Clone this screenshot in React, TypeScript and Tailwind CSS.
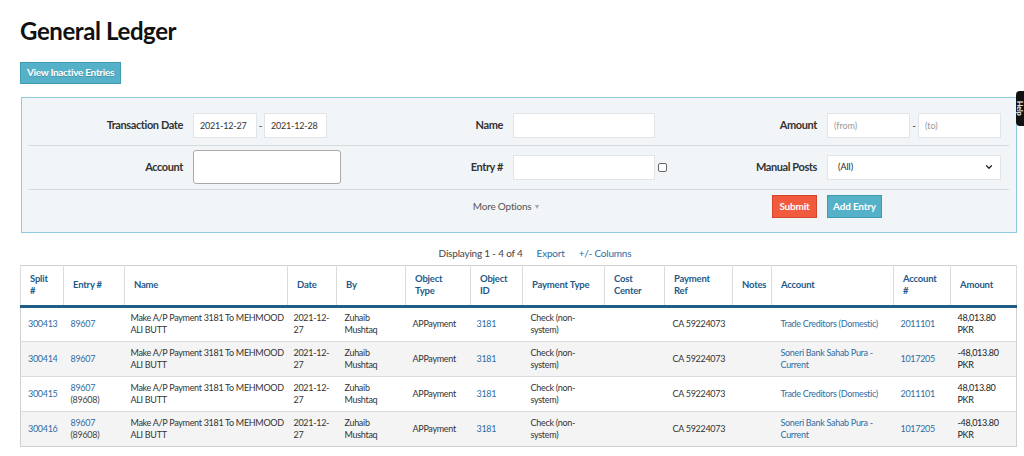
import { ChevronDown } from "lucide-react"

const rows = [
    { split: "300413", entry: "89607", sub: "", acct: ["Trade Creditors (Domestic)"], acctNo: "2011101", amt: "48,013.80" },
    { split: "300414", entry: "89607", sub: "", acct: ["Soneri Bank Sahab Pura -", "Current"], acctNo: "1017205", amt: "-48,013.80" },
    { split: "300415", entry: "89607", sub: "(89608)", acct: ["Trade Creditors (Domestic)"], acctNo: "2011101", amt: "48,013.80" },
    { split: "300416", entry: "89607", sub: "(89608)", acct: ["Soneri Bank Sahab Pura -", "Current"], acctNo: "1017205", amt: "-48,013.80" },
]

const cols = [
    { label: ["Split", "#"], w: 43 },
    { label: ["Entry #"], w: 61 },
    { label: ["Name"], w: 163 },
    { label: ["Date"], w: 49 },
    { label: ["By"], w: 69 },
    { label: ["Object", "Type"], w: 65 },
    { label: ["Object", "ID"], w: 52 },
    { label: ["Payment Type"], w: 82 },
    { label: ["Cost", "Center"], w: 60 },
    { label: ["Payment", "Ref"], w: 68 },
    { label: ["Notes"], w: 39 },
    { label: ["Account"], w: 122 },
    { label: ["Account", "#"], w: 57 },
    { label: ["Amount"], w: 66 },
]

function Label({ children, w }: { children: React.ReactNode; w: string }) {
    return (
        <div className={`${w} shrink-0 whitespace-nowrap pr-[10px] text-right text-[11px] font-bold tracking-[-0.4px] text-[#333]`}>
            {children}
        </div>
    )
}

function Lines({ items }: { items: string[] }) {
    return (
        <>
            {items.map((t) => (
                <div key={t}>{t}</div>
            ))}
        </>
    )
}

function App() {
    return (
        <div className="relative w-[1024px] h-[456px] overflow-hidden bg-white font-['Lato',sans-serif] text-[#333]">
            <h1 className="pl-[20px] pt-[16px] text-[24px] leading-[30px] font-bold tracking-[-0.4px] text-[#111]">General Ledger</h1>

            <div className="pl-[20px] pt-[12px]">
                <button className="h-[22px] w-[101px] whitespace-nowrap border border-[#3f9bb3] bg-[#54b1c8] text-[10px] font-bold tracking-[-0.3px] text-white [text-shadow:0_1px_0_rgba(0,0,0,0.2)]">
                    View Inactive Entries
                </button>
            </div>

            {/* filter panel */}
            <div className="mx-[21px] mt-[13px] w-[996px] border border-[#8fcbdc] bg-[#f2f5f7]">
                <div className="flex h-[47px] items-center px-[6px] pt-[8px]">
                    <Label w="w-[165px]">Transaction Date</Label>
                    <div className="flex w-[152px] items-center">
                        <input readOnly value="2021-12-27" className="h-[25px] w-[64px] border border-[#e2e5e8] bg-white px-[6px] text-[9px] tracking-[-0.2px] text-[#333] outline-none" />
                        <span className="w-[7px] text-center text-[10px]">-</span>
                        <input readOnly value="2021-12-28" className="h-[25px] w-[63px] border border-[#e2e5e8] bg-white px-[6px] text-[9px] tracking-[-0.2px] text-[#333] outline-none" />
                    </div>
                    <Label w="w-[168px]">Name</Label>
                    <div className="w-[159px]">
                        <input className="h-[25px] w-[142px] border border-[#e2e5e8] bg-white outline-none" />
                    </div>
                    <Label w="w-[155px]">Amount</Label>
                    <div className="flex items-center">
                        <input placeholder="(from)" className="h-[25px] w-[83px] border border-[#e2e5e8] bg-white px-[6px] text-[9px] outline-none placeholder:text-[#999]" />
                        <span className="w-[8px] text-center text-[10px]">-</span>
                        <input placeholder="(to)" className="h-[25px] w-[83px] border border-[#e2e5e8] bg-white px-[6px] text-[9px] outline-none placeholder:text-[#999]" />
                    </div>
                </div>
                <div className="ml-[6px] mr-[7px] h-px bg-[#d6dbde]" />
                <div className="flex h-[43px] items-center px-[6px]">
                    <Label w="w-[165px]">Account</Label>
                    <div className="w-[152px]">
                        <input className="h-[34px] w-[148px] rounded-[3px] border border-[#a9a9a9] bg-white outline-none" />
                    </div>
                    <Label w="w-[168px]">Entry #</Label>
                    <div className="flex w-[159px] items-center">
                        <input className="h-[25px] w-[142px] border border-[#e2e5e8] bg-white outline-none" />
                        <span className="ml-[3px] h-[9px] w-[9px] rounded-[2px] border border-[#666] bg-white" />
                    </div>
                    <Label w="w-[155px]">Manual Posts</Label>
                    <div className="flex h-[25px] w-[174px] items-center justify-between border border-[#e2e5e8] bg-white pl-[10px] pr-[6px] text-[9px] text-[#222]">
                        <span>(All)</span>
                        <ChevronDown size={10} strokeWidth={3} className="text-[#222]" />
                    </div>
                </div>
                <div className="ml-[6px] mr-[7px] h-px bg-[#d6dbde]" />
                <div className="flex h-[42px] items-start px-[6px] pt-[5px]">
                    <div className="w-[165px]" />
                    <div className="w-[152px]" />
                    <div className="flex h-[23px] w-[327px] items-center justify-center pr-[4px] text-[10px] tracking-[-0.2px] text-[#555]">
                        More Options
                        <span className="ml-[2px] text-[7px] text-[#aaa]">▼</span>
                    </div>
                    <div className="flex w-[155px] justify-end pr-[10px]">
                        <button className="h-[23px] w-[45px] border border-[#d4452c] bg-[#f25a3e] text-[10px] font-bold tracking-[-0.2px] text-white">Submit</button>
                    </div>
                    <button className="h-[23px] w-[55px] whitespace-nowrap border border-[#3f9bb3] bg-[#54b1c8] text-[10px] font-bold tracking-[-0.2px] text-white">Add Entry</button>
                </div>
            </div>

            {/* help tab */}
            <div className="absolute right-0 top-[91px] flex h-[35px] w-[8px] items-center justify-start overflow-hidden rounded-l-[4px] bg-[#111]">
                <span className="-ml-[4px] rotate-90 text-[7px] font-bold text-white">Help</span>
            </div>

            <div className="flex h-[31px] items-center justify-center gap-[14px] pl-[46px] pt-[10px] text-[10px] tracking-[-0.2px]">
                <span className="text-[#444]">Displaying 1 - 4 of 4</span>
                <span className="text-[#2e6da4]">Export</span>
                <span className="text-[#2e6da4]">+/- Columns</span>
            </div>

            <table className="ml-[20px] mt-[1px] w-[996px] table-fixed border-collapse border border-[#cfcfcf] text-[9px] leading-[12px] tracking-[-0.3px]">
                <colgroup>
                    {cols.map((c) => (
                        <col key={c.label.join()} style={{ width: c.w }} />
                    ))}
                </colgroup>
                <thead>
                    <tr className="h-[41px] border-b-[3px] border-[#1f5c86]">
                        {cols.map((c) => (
                            <th key={c.label.join()} className="whitespace-nowrap border-x border-[#dcdcdc] px-[9px] text-left text-[9.5px] font-bold tracking-[-0.2px] text-[#1f5a8a]">
                                <Lines items={c.label} />
                            </th>
                        ))}
                    </tr>
                </thead>
                <tbody>
                    {rows.map((r, i) => (
                        <tr key={r.split} className={`h-[35px] whitespace-nowrap border-t border-[#dcdcdc] ${i % 2 ? "bg-[#f4f4f4]" : "bg-white"}`}>
                            <td className="px-[7px] text-[#2e6da4]">{r.split}</td>
                            <td className="px-[7px] text-[#2e6da4]">
                                {r.entry}
                                {r.sub && <div className="text-[#444]">{r.sub}</div>}
                            </td>
                            <td className="px-[6px]">
                                <Lines items={["Make A/P Payment 3181 To MEHMOOD", "ALI BUTT"]} />
                            </td>
                            <td className="px-[6px]">
                                <Lines items={["2021-12-", "27"]} />
                            </td>
                            <td className="px-[8px]">
                                <Lines items={["Zuhaib", "Mushtaq"]} />
                            </td>
                            <td className="px-[7px]">APPayment</td>
                            <td className="px-[6px] text-[#2e6da4]">3181</td>
                            <td className="px-[8px]">
                                <Lines items={["Check (non-", "system)"]} />
                            </td>
                            <td className="px-[7px]"></td>
                            <td className="px-[8px]">CA 59224073</td>
                            <td className="px-[7px]"></td>
                            <td className="px-[9px] text-[#2e6da4]">
                                <Lines items={r.acct} />
                            </td>
                            <td className="px-[7px] text-[#2e6da4]">{r.acctNo}</td>
                            <td className="px-[7px] text-[#222]">
                                {r.amt}
                                <div>PKR</div>
                            </td>
                        </tr>
                    ))}
                </tbody>
            </table>
        </div>
    )
}

export default App
